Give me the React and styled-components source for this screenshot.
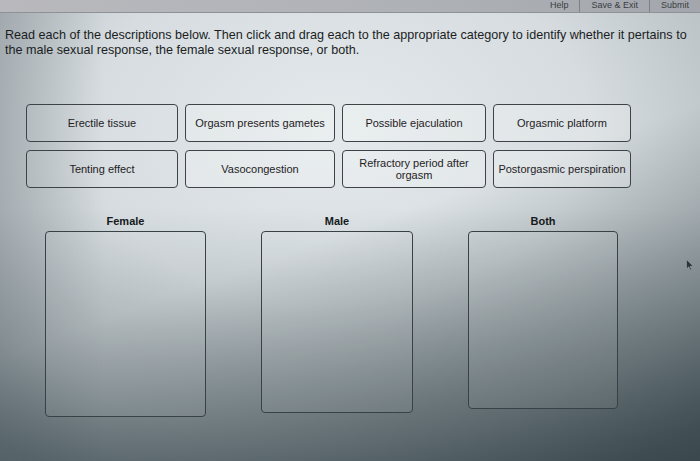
import React from "react";
import styled, { createGlobalStyle } from "styled-components";

const Global = createGlobalStyle`
  html, body { margin: 0; padding: 0; }
  body {
    width: 700px;
    height: 461px;
    overflow: hidden;
    font-family: "Liberation Sans", Arial, sans-serif;
    background:
      linear-gradient(160deg, rgba(0,0,0,0) 50%, rgba(25,40,45,0.6) 100%),
      linear-gradient(180deg, rgba(0,0,0,0) 45%, rgba(40,55,62,0.35) 100%),
      linear-gradient(90deg, rgba(90,100,108,0.3) 0%, rgba(0,0,0,0) 15%),
      radial-gradient(ellipse 80% 85% at 48% 28%, #e4eaec 0%, #d6dcdf 45%, #b4bcc0 80%, #909ca1 100%);
  }
`;

const Page = styled.div`
  position: relative;
  width: 700px;
  height: 461px;
  display: flex;
  flex-direction: column;
`;

const Header = styled.div`
  height: 12px;
  overflow: hidden;
  background: linear-gradient(90deg, #b9b9bd, #aeb1b6 60%, #a3a7ad);
  border-bottom: 1px solid #8e9297;
  display: flex;
  justify-content: flex-end;
  align-items: stretch;
`;

const HeaderButton = styled.div`
  font-size: 9px;
  line-height: 11px;
  color: #3a3d42;
  padding: 0 11px;
  border-left: ${(p) => (p.$sep ? "1px solid #7d8187" : "none")};
  display: flex;
  align-items: flex-start;
`;

const Instructions = styled.p`
  margin: 15px 0 0 5px;
  font-size: 12.6px;
  line-height: 15px;
  color: #1b1d1f;
  white-space: nowrap;
`;

const CardGrid = styled.div`
  margin: 46px 0 0 26px;
  display: grid;
  grid-template-columns: 152px 150px 144px 138px;
  grid-auto-rows: 38px;
  column-gap: 7px;
  row-gap: 8px;
`;

const Card = styled.div`
  box-sizing: border-box;
  border: 1.5px solid #3d4347;
  border-radius: 4px;
  background: rgba(255, 255, 255, ${(p) => (p.$dim ? 0.04 : 0.22)});
  display: flex;
  align-items: center;
  justify-content: center;
  text-align: center;
  font-size: 11px;
  line-height: 12px;
  color: #1f2225;
  white-space: pre-line;
  padding: 0 4px;
`;

const Categories = styled.div`
  margin: 27px 0 0 45px;
  display: grid;
  grid-template-columns: 161px 152px 150px;
  column-gap: 55px;
`;

const Category = styled.div`
  display: flex;
  flex-direction: column;
  align-items: center;
  gap: 3px;
`;

const CategoryLabel = styled.div`
  font-size: 11px;
  line-height: 13px;
  font-weight: bold;
  color: #16191b;
`;

const DropZone = styled.div`
  box-sizing: border-box;
  width: 100%;
  height: ${(p) => p.$h}px;
  border: 1.5px solid #384246;
  border-radius: 4px;
  background: rgba(255, 255, 255, 0.06);
`;

const Cursor = styled.svg`
  position: absolute;
  left: 686px;
  top: 259px;
`;

const cards = [
  { text: "Erectile tissue", dim: true },
  { text: "Orgasm presents gametes" },
  { text: "Possible ejaculation" },
  { text: "Orgasmic platform" },
  { text: "Tenting effect", dim: true },
  { text: "Vasocongestion" },
  { text: "Refractory period after\norgasm" },
  { text: "Postorgasmic perspiration" },
];

const categories = [
  { name: "Female", h: 186 },
  { name: "Male", h: 182 },
  { name: "Both", h: 178 },
];

export default function App() {
  return (
    <Page>
      <Global />
      <Header>
        <HeaderButton>Help</HeaderButton>
        <HeaderButton $sep>Save &amp; Exit</HeaderButton>
        <HeaderButton $sep>Submit</HeaderButton>
      </Header>
      <Instructions>
        Read each of the descriptions below. Then click and drag each to the appropriate category to identify whether it pertains to
        <br />
        the male sexual response, the female sexual response, or both.
      </Instructions>
      <CardGrid>
        {cards.map((c) => (
          <Card key={c.text} $dim={c.dim}>
            {c.text}
          </Card>
        ))}
      </CardGrid>
      <Categories>
        {categories.map((c) => (
          <Category key={c.name}>
            <CategoryLabel>{c.name}</CategoryLabel>
            <DropZone $h={c.h} />
          </Category>
        ))}
      </Categories>
      <Cursor width="8" height="12" viewBox="0 0 8 12">
        <path d="M0.5 0.5 L0.5 10 L2.8 7.8 L4.4 11.2 L5.6 10.6 L4.1 7.3 L7.2 7.3 Z" fill="#2b3438" stroke="#9aa5a9" strokeWidth="0.6" />
      </Cursor>
    </Page>
  );
}
